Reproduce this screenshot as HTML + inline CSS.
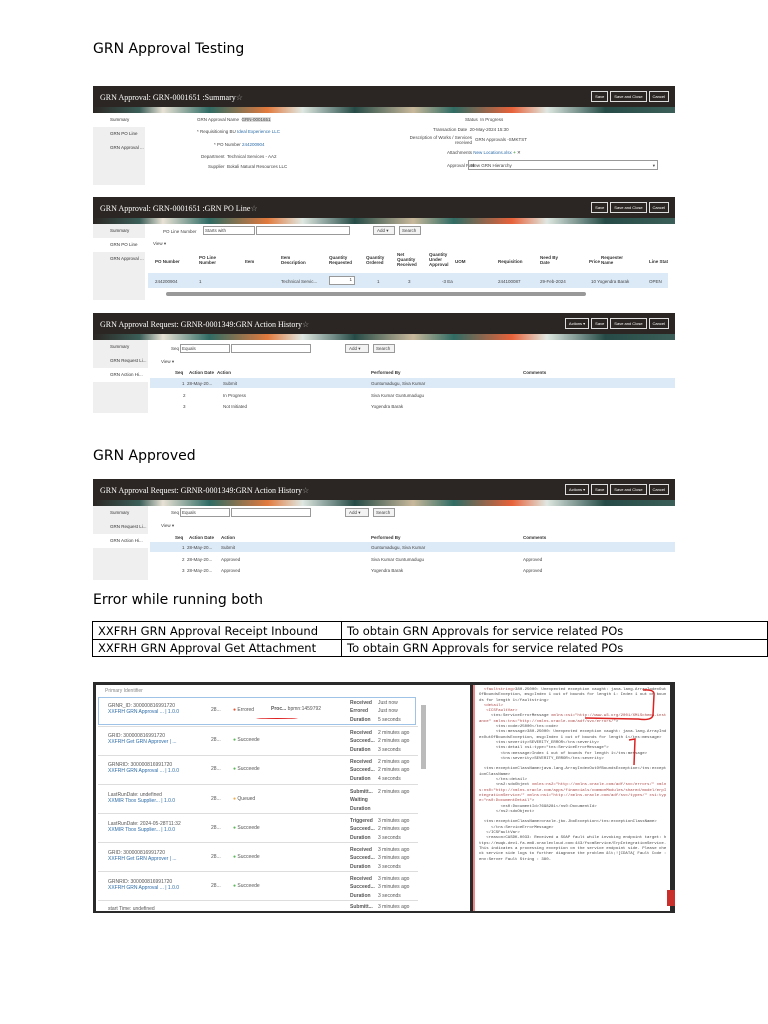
<!DOCTYPE html>
<html><head><meta charset="utf-8"><style>
*{margin:0;padding:0;box-sizing:border-box}
body{width:768px;height:1024px;background:#fff;position:relative;font-family:"Liberation Sans",sans-serif;color:#000;overflow:hidden}
.a{position:absolute}
h2{position:absolute;left:93px;font-weight:normal;font-size:14px;font-family:"DejaVu Sans","Liberation Sans",sans-serif}
.shot{position:absolute;left:93px;width:582px;background:#fff;overflow:hidden;font-size:4.5px;color:#444}
.hdr{position:absolute;left:0;top:0;width:100%;height:21px;background:#2b2623;color:#fff;font-family:"Liberation Serif",serif;font-size:8px;padding:7px 0 0 7px}
.strip{position:absolute;left:0;top:21px;width:100%;height:6px;background:linear-gradient(90deg,#2b2623 0,#3b5e58 8%,#e8e2d6 12%,#2f6b63 20%,#e27a3e 30%,#dfe8e2 36%,#264b46 45%,#c8b89b 55%,#2f6b63 62%,#e8623a 72%,#dfe8e2 78%,#264b46 88%,#3b5e58 100%)}
.btns{position:absolute;top:5px;right:6px;display:flex;gap:2px}
.btns span{border:1px solid #ddd;color:#fff;font-family:"Liberation Sans",sans-serif;font-size:4px;padding:2px 3px}
.side{position:absolute;left:0;top:27px;width:52px;bottom:0;background:#efefef}
.side div{height:14px;padding:4px 0 0 17px;font-size:4.5px;color:#333}
.side div.on{background:#fff}
.blue{color:#2d6ca8}
</style></head><body>

<h2 style="top:41px">GRN Approval Testing</h2>

<!-- shot 1 -->
<div class="shot" style="top:86px;height:99px">
 <div class="hdr">GRN Approval: GRN-0001651 :Summary<span style="color:#aaa">☆</span>
  <div class="btns"><span>Save</span><span>Save and Close</span><span>Cancel</span></div></div>
 <div class="strip"></div>
 <div class="side"><div class="on">Summary</div><div>GRN PO Line</div><div>GRN Approval ...</div></div>
 <div class="a" style="left:104px;top:31px">GRN Approval Name &nbsp;<span style="background:#ddd">GRN-0001651</span></div>
 <div class="a" style="left:104px;top:43px">* Requisitioning BU <span class="blue">Ideal Experience LLC</span></div>
 <div class="a" style="left:121px;top:56px">* PO Number <span class="blue">244200904</span></div>
 <div class="a" style="left:108px;top:68px">Department &nbsp;Technical Services - AA2</div>
 <div class="a" style="left:115px;top:78px">Supplier &nbsp;Bokali Natural Resources LLC</div>
 <div class="a" style="left:372px;top:31px">Status &nbsp;In Progress</div>
 <div class="a" style="left:340px;top:41px">Transaction Date &nbsp;20-May-2024 15:30</div>
 <div class="a" style="left:309px;top:49px;text-align:right;width:70px">Description of Works / Services received</div>
 <div class="a" style="left:382px;top:51px">GRN Approvals -SMKTST</div>
 <div class="a" style="left:354px;top:64px">Attachments <span class="blue">New Locations.xlsx</span> <b style="color:#5a5">+</b> ✕</div>
 <div class="a" style="left:354px;top:77px">Approval Path</div>
 <div class="a" style="left:375px;top:74px;width:190px;height:10px;border:1px solid #999;padding:2px">New GRN Hierarchy<span style="position:absolute;right:2px">▾</span></div>
</div>

<!-- shot 2 -->
<div class="shot" style="top:197px;height:103px">
 <div class="hdr">GRN Approval: GRN-0001651 :GRN PO Line<span style="color:#aaa">☆</span>
  <div class="btns"><span>Save</span><span>Save and Close</span><span>Cancel</span></div></div>
 <div class="strip"></div>
 <div class="side"><div>Summary</div><div class="on">GRN PO Line</div><div>GRN Approval ...</div></div>
 <div class="a" style="left:70px;top:32px">PO Line Number</div>
 <div class="a" style="left:110px;top:29px;width:52px;height:9px;border:1px solid #999;padding:1px">Starts with</div>
 <div class="a" style="left:163px;top:29px;width:94px;height:9px;border:1px solid #999"></div>
 <div class="a" style="left:280px;top:29px;width:22px;height:9px;border:1px solid #999;background:#f3f3f3;padding:1px 3px">Add ▾</div>
 <div class="a" style="left:306px;top:29px;width:22px;height:9px;border:1px solid #999;background:#f3f3f3;padding:1px 2px">Search</div>
 <div class="a" style="left:60px;top:44px">View ▾</div>
 <div class="a" style="left:62px;top:55px;width:520px;font-weight:bold;color:#333">
  <span class="a" style="left:0;top:7px">PO Number</span><span class="a" style="left:44px;top:3px">PO Line<br>Number</span><span class="a" style="left:90px;top:7px">Item</span><span class="a" style="left:126px;top:3px">Item<br>Description</span><span class="a" style="left:174px;top:3px">Quantity<br>Requested</span><span class="a" style="left:211px;top:3px">Quantity<br>Ordered</span><span class="a" style="left:242px;top:0">Net<br>Quantity<br>Received</span><span class="a" style="left:274px;top:0">Quantity<br>Under<br>Approval</span><span class="a" style="left:300px;top:7px">UOM</span><span class="a" style="left:343px;top:7px">Requisition</span><span class="a" style="left:385px;top:3px">Need By<br>Date</span><span class="a" style="left:434px;top:7px">Price</span><span class="a" style="left:446px;top:3px">Requester<br>Name</span><span class="a" style="left:494px;top:7px">Line Stat</span>
 </div>
 <div class="a" style="left:55px;top:76px;width:520px;height:15px;background:#dce9f7"></div>
 <div class="a" style="left:62px;top:82px;width:520px">
  <span class="a" style="left:0">244200904</span><span class="a" style="left:44px">1</span><span class="a" style="left:126px">Technical Servic...</span><span class="a" style="left:174px;top:-3px;width:26px;height:9px;background:#fff;border:1px solid #999;text-align:right;padding-right:2px">1</span><span class="a" style="left:222px">1</span><span class="a" style="left:253px">3</span><span class="a" style="left:287px">-3 Ea</span><span class="a" style="left:343px">244100087</span><span class="a" style="left:385px">29-Feb-2024</span><span class="a" style="left:436px">10 Yogendra Barak</span><span class="a" style="left:494px">OPEN</span>
 </div>
 <div class="a" style="left:73px;top:95px;width:420px;height:4px;background:#999;border-radius:2px"></div>
</div>

<!-- shot 3 -->
<div class="shot" style="top:313px;height:100px">
 <div class="hdr">GRN Approval Request: GRNR-0001349:GRN Action History<span style="color:#aaa">☆</span>
  <div class="btns"><span>Actions ▾</span><span>Save</span><span>Save and Close</span><span>Cancel</span></div></div>
 <div class="strip"></div>
 <div class="side" style="width:55px"><div>Summary</div><div>GRN Request Li...</div><div class="on">GRN Action Hi...</div></div>
 <div class="a" style="left:78px;top:33px">Seq</div>
 <div class="a" style="left:87px;top:31px;width:50px;height:9px;border:1px solid #999;padding:1px">Equals</div>
 <div class="a" style="left:138px;top:31px;width:80px;height:9px;border:1px solid #999"></div>
 <div class="a" style="left:252px;top:31px;width:24px;height:9px;border:1px solid #999;background:#f3f3f3;padding:1px 3px">Add ▾</div>
 <div class="a" style="left:280px;top:31px;width:22px;height:9px;border:1px solid #999;background:#f3f3f3;padding:1px 2px">Search</div>
 <div class="a" style="left:68px;top:46px">View ▾</div>
 <div class="a" style="left:82px;top:57px;font-weight:bold;color:#333">Seq</div><div class="a" style="left:96px;top:57px;font-weight:bold;color:#333">Action Date</div><div class="a" style="left:124px;top:57px;font-weight:bold;color:#333">Action</div><div class="a" style="left:278px;top:57px;font-weight:bold;color:#333">Performed By</div><div class="a" style="left:430px;top:57px;font-weight:bold;color:#333">Comments</div>
 <div class="a" style="left:57px;top:65px;width:525px;height:10px;background:#dce9f7"></div>
 <div class="a" style="left:89px;top:68px">1 &nbsp;28-May-20...</div><div class="a" style="left:130px;top:68px">Submit</div><div class="a" style="left:278px;top:68px">Guntumadugu, Siva Kumar</div>
 <div class="a" style="left:90px;top:80px">2</div><div class="a" style="left:130px;top:80px">In Progress</div><div class="a" style="left:278px;top:80px">Siva Kumar Guntumadugu</div>
 <div class="a" style="left:90px;top:91px">3</div><div class="a" style="left:130px;top:91px">Not Initiated</div><div class="a" style="left:278px;top:91px">Yogendra Barak</div>
</div>

<h2 style="top:448px">GRN Approved</h2>

<!-- shot 4 -->
<div class="shot" style="top:479px;height:101px">
 <div class="hdr">GRN Approval Request: GRNR-0001349:GRN Action History<span style="color:#aaa">☆</span>
  <div class="btns"><span>Actions ▾</span><span>Save</span><span>Save and Close</span><span>Cancel</span></div></div>
 <div class="strip"></div>
 <div class="side" style="width:55px"><div>Summary</div><div>GRN Request Li...</div><div class="on">GRN Action Hi...</div></div>
 <div class="a" style="left:78px;top:31px">Seq</div>
 <div class="a" style="left:87px;top:29px;width:50px;height:9px;border:1px solid #999;padding:1px">Equals</div>
 <div class="a" style="left:138px;top:29px;width:80px;height:9px;border:1px solid #999"></div>
 <div class="a" style="left:252px;top:29px;width:24px;height:9px;border:1px solid #999;background:#f3f3f3;padding:1px 3px">Add ▾</div>
 <div class="a" style="left:280px;top:29px;width:22px;height:9px;border:1px solid #999;background:#f3f3f3;padding:1px 2px">Search</div>
 <div class="a" style="left:68px;top:44px">View ▾</div>
 <div class="a" style="left:82px;top:56px;font-weight:bold;color:#333">Seq</div><div class="a" style="left:96px;top:56px;font-weight:bold;color:#333">Action Date</div><div class="a" style="left:128px;top:56px;font-weight:bold;color:#333">Action</div><div class="a" style="left:278px;top:56px;font-weight:bold;color:#333">Performed By</div><div class="a" style="left:430px;top:56px;font-weight:bold;color:#333">Comments</div>
 <div class="a" style="left:57px;top:63px;width:525px;height:10px;background:#dce9f7"></div>
 <div class="a" style="left:89px;top:66px">1 &nbsp;28-May-20...</div><div class="a" style="left:128px;top:66px">Submit</div><div class="a" style="left:278px;top:66px">Guntumadugu, Siva Kumar</div>
 <div class="a" style="left:89px;top:78px">2 &nbsp;28-May-20...</div><div class="a" style="left:128px;top:78px">Approved</div><div class="a" style="left:278px;top:78px">Siva Kumar Guntumadugu</div><div class="a" style="left:430px;top:78px">Approved</div>
 <div class="a" style="left:89px;top:89px">3 &nbsp;28-May-20...</div><div class="a" style="left:128px;top:89px">Approved</div><div class="a" style="left:278px;top:89px">Yogendra Barak</div><div class="a" style="left:430px;top:89px">Approved</div>
</div>

<h2 style="top:592px">Error while running both</h2>

<table class="a" style="left:92px;top:621px;width:676px;border-collapse:collapse;font-family:'DejaVu Sans','Liberation Sans',sans-serif;font-size:11.5px">
<tr style="height:18px"><td style="border:1px solid #000;width:249px;padding:0 5px">XXFRH GRN Approval Receipt Inbound</td><td style="border:1px solid #000;padding:0 5px">To obtain GRN Approvals for service related POs</td></tr>
<tr style="height:17px"><td style="border:1px solid #000;padding:0 5px">XXFRH GRN Approval Get Attachment</td><td style="border:1px solid #000;padding:0 5px">To obtain GRN Approvals for service related POs</td></tr>
</table>

<!-- shot 5 -->
<div class="a" style="left:93px;top:682px;width:582px;height:231px;background:#2a2a2a;overflow:hidden;font-size:5px;color:#555">
 <div class="a" style="left:3px;top:3px;width:374px;height:226px;background:#fff"></div>
 <div class="a" style="left:5px;top:15px;width:318px;height:28px;border:1px solid #9ec3e6"></div>
 <div class="a" style="left:12px;top:6px;color:#888">Primary Identifier</div>
 <div class="a" style="left:328px;top:23px;width:5px;height:64px;background:#bbb"></div>
 <div class="a" style="left:15px;top:21px">GRNR_ID: 300000816991720<br><span class="blue">XXFRH GRN Approval ... | 1.0.0</span></div>
 <div class="a" style="left:118px;top:25px">28...</div><div class="a" style="left:140px;top:25px"><span style="color:#e8532f">●</span> Errored</div><div class="a" style="left:178px;top:24px"><b>Proc...</b> bpmn:1459792</div>
 <div class="a" style="left:163px;top:36px;width:42px;height:2px;border-top:1.5px solid #d22;border-radius:50%"></div>
 <div class="a" style="left:257px;top:17px;line-height:8.3px"><b>Received</b><br><b>Errored</b><br><b>Duration</b></div><div class="a" style="left:285px;top:17px;line-height:8.3px">Just now<br>Just now<br>5 seconds</div>

 <div class="a" style="left:15px;top:51px">GRID: 300000816991720<br><span class="blue">XXFRH Get GRN Approver | ...</span></div>
 <div class="a" style="left:118px;top:55px">28...</div><div class="a" style="left:140px;top:55px"><span style="color:#5cb85c">●</span> Succeede</div>
 <div class="a" style="left:257px;top:47px;line-height:8.3px"><b>Received</b><br><b>Succeed...</b><br><b>Duration</b></div><div class="a" style="left:285px;top:47px;line-height:8.3px">2 minutes ago<br>2 minutes ago<br>3 seconds</div>

 <div class="a" style="left:15px;top:80px">GRNRID: 300000816991720<br><span class="blue">XXFRH GRN Approval ... | 1.0.0</span></div>
 <div class="a" style="left:118px;top:84px">28...</div><div class="a" style="left:140px;top:84px"><span style="color:#5cb85c">●</span> Succeede</div>
 <div class="a" style="left:257px;top:76px;line-height:8.3px"><b>Received</b><br><b>Succeed...</b><br><b>Duration</b></div><div class="a" style="left:285px;top:76px;line-height:8.3px">2 minutes ago<br>2 minutes ago<br>4 seconds</div>

 <div class="a" style="left:15px;top:110px">LastRunDate: undefined<br><span class="blue">XXMIR Tbox Supplier... | 1.0.0</span></div>
 <div class="a" style="left:118px;top:114px">28...</div><div class="a" style="left:140px;top:114px"><span style="color:#f0ad4e">●</span> Queued</div>
 <div class="a" style="left:257px;top:106px;line-height:8.3px"><b>Submitt...</b><br><b>Waiting</b><br><b>Duration</b></div><div class="a" style="left:285px;top:106px;line-height:8.3px">2 minutes ago</div>

 <div class="a" style="left:15px;top:139px">LastRunDate: 2024-05-28T11:32<br><span class="blue">XXMIR Tbox Supplier... | 1.0.0</span></div>
 <div class="a" style="left:118px;top:143px">28...</div><div class="a" style="left:140px;top:143px"><span style="color:#5cb85c">●</span> Succeede</div>
 <div class="a" style="left:257px;top:135px;line-height:8.3px"><b>Triggered</b><br><b>Succeed...</b><br><b>Duration</b></div><div class="a" style="left:285px;top:135px;line-height:8.3px">3 minutes ago<br>2 minutes ago<br>3 seconds</div>

 <div class="a" style="left:15px;top:168px">GRID: 300000816991720<br><span class="blue">XXFRH Get GRN Approver | ...</span></div>
 <div class="a" style="left:118px;top:172px">28...</div><div class="a" style="left:140px;top:172px"><span style="color:#5cb85c">●</span> Succeede</div>
 <div class="a" style="left:257px;top:164px;line-height:8.3px"><b>Received</b><br><b>Succeed...</b><br><b>Duration</b></div><div class="a" style="left:285px;top:164px;line-height:8.3px">3 minutes ago<br>3 minutes ago<br>3 seconds</div>

 <div class="a" style="left:15px;top:197px">GRNRID: 300000816991720<br><span class="blue">XXFRH GRN Approval ... | 1.0.0</span></div>
 <div class="a" style="left:118px;top:201px">28...</div><div class="a" style="left:140px;top:201px"><span style="color:#5cb85c">●</span> Succeede</div>
 <div class="a" style="left:257px;top:193px;line-height:8.3px"><b>Received</b><br><b>Succeed...</b><br><b>Duration</b></div><div class="a" style="left:285px;top:193px;line-height:8.3px">3 minutes ago<br>3 minutes ago<br>3 seconds</div>

 <div class="a" style="left:15px;top:224px">start Time: undefined</div>
 <div class="a" style="left:257px;top:222px"><b>Submitt...</b></div><div class="a" style="left:285px;top:222px">3 minutes ago</div>
 <div class="a" style="left:5px;top:44px;width:320px;border-top:1px solid #ddd"></div>
 <div class="a" style="left:5px;top:73px;width:320px;border-top:1px solid #ddd"></div>
 <div class="a" style="left:5px;top:102px;width:320px;border-top:1px solid #ddd"></div>
 <div class="a" style="left:5px;top:131px;width:320px;border-top:1px solid #ddd"></div>
 <div class="a" style="left:5px;top:160px;width:320px;border-top:1px solid #ddd"></div>
 <div class="a" style="left:5px;top:189px;width:320px;border-top:1px solid #ddd"></div>
 <div class="a" style="left:5px;top:218px;width:320px;border-top:1px solid #ddd"></div>

 <!-- right xml pane -->
 <div class="a" style="left:380px;top:3px;width:197px;height:226px;background:#fff;border-left:2px solid #e88"></div>
 <div class="a" style="left:386px;top:6px;width:188px;font-family:'Liberation Mono',monospace;font-size:4px;line-height:5.3px;color:#444;white-space:pre-wrap;word-break:break-all">  <span style="color:#a44">&lt;faultstring&gt;</span>380-25000: Unexpected exception caught: java.lang.ArrayIndexOutOfBoundsException, msg=Index 1 out of bounds for length 1: Index 1 out of bounds for length 1&lt;/faultstring&gt;
  <span style="color:#a44">&lt;detail&gt;</span>
   <span style="color:#a44">&lt;ICSFaultVar&gt;</span>
     &lt;tns:ServiceErrorMessage <span style="color:#a44">xmlns:xsi="http://www.w3.org/2001/XMLSchema-instance" xmlns:tns="http://xmlns.oracle.com/adf/svc/errors/"</span>&gt;
       &lt;tns:code&gt;25000&lt;/tns:code&gt;
       &lt;tns:message&gt;380-25000: Unexpected exception caught: java.lang.ArrayIndexOutOfBoundsException, msg=Index 1 out of bounds for length 1&lt;/tns:message&gt;
       &lt;tns:severity&gt;SEVERITY_ERROR&lt;/tns:severity&gt;
       &lt;tns:detail xsi:type="tns:ServiceErrorMessage"&gt;
         &lt;tns:message&gt;Index 1 out of bounds for length 1&lt;/tns:message&gt;
         &lt;tns:severity&gt;SEVERITY_ERROR&lt;/tns:severity&gt;

  &lt;tns:exceptionClassName&gt;java.lang.ArrayIndexOutOfBoundsException&lt;/tns:exceptionClassName&gt;
       &lt;/tns:detail&gt;
       &lt;ns2:sdoObject <span style="color:#a44">xmlns:ns2="http://xmlns.oracle.com/adf/svc/errors/" xmlns:ns0="http://xmlns.oracle.com/apps/financials/commonModules/shared/model/erpIntegrationService/" xmlns:ns1="http://xmlns.oracle.com/adf/svc/types/" xsi:type="ns0:DocumentDetail"</span>&gt;
         &lt;ns0:DocumentId&gt;7698281&lt;/ns0:DocumentId&gt;
       &lt;/ns2:sdoObject&gt;

  &lt;tns:exceptionClassName&gt;oracle.jbo.JboException&lt;/tns:exceptionClassName&gt;
     &lt;/tns:ServiceErrorMessage&gt;
   &lt;/ICSFaultVar&gt;
   &lt;reason&gt;CASDK-0033: Received a SOAP fault while invoking endpoint target: https://ewqb-dev1.fa.em8.oraclecloud.com:443/fscmService/ErpIntegrationService. This indicates a processing exception on the service endpoint side. Please check service side logs to further diagnose the problem &amp;lt;![CDATA[ Fault Code : env:Server Fault String : 380-</div>
 <svg class="a" style="left:470px;top:3px" width="100" height="90"><path d="M80 5 Q92 4 91 10 L90 30 Q89 36 75 34 L22 33" stroke="#d22" stroke-width="1.5" fill="none"/><path d="M66 55 L72 54 L71 80" stroke="#d22" stroke-width="1.5" fill="none"/></svg>
 <div class="a" style="left:574px;top:208px;width:8px;height:16px;background:#c9302c"></div>
</div>
</body></html>
